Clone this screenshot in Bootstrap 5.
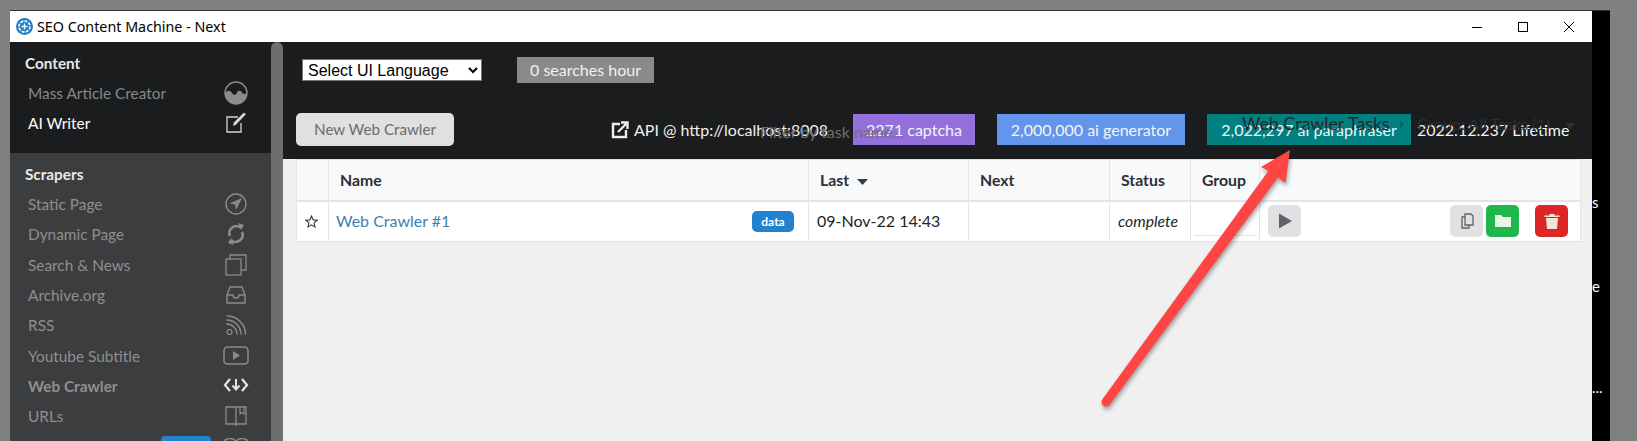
<!DOCTYPE html>
<html lang="en">
<head>
<meta charset="utf-8">
<title>SEO Content Machine - Next</title>
<link rel="stylesheet" href="https://cdn.jsdelivr.net/npm/bootstrap@5.3.0/dist/css/bootstrap.min.css">
<style>
html,body{height:441px;overflow:hidden}
body{background:#808080;font-family:Lato,"Liberation Sans",sans-serif;color:#212529;font-size:15px}
.shell{margin:10px 0 0 10px;width:1600px;height:431px;border-top:1px solid #333;background:#000;position:relative}
.appwin{width:1582px;height:100%;background:#f0f0f0}
.titlebar{height:31px;background:#fff;padding-left:6px;font-family:"Noto Sans","Open Sans",sans-serif;font-size:14.3px;color:#000;line-height:31px}
.titlebar .ttl{margin-left:4px}
.winbtn{width:46px;height:31px}
.appbody{height:399px;overflow:hidden}
.sidenav{width:261px;flex:none;background:#3c3d3f}
.sec-dark{background:#1b1c1e;height:111px;padding-top:6px}
.sec-mid{padding-top:6px}
.sec-head{font-weight:700;color:#e8e8e8;padding-left:15px;height:30px;line-height:30px;font-size:15.3px}
.navrow{height:30.3px;padding:0 22px 0 18px;color:#888;font-size:15.4px;line-height:30px}
.navrow.on{color:#fff;font-weight:700}
.sec-mid .navrow{color:#8f8f8f}
.navrow svg{display:block;width:26px;height:26px;color:#8b8b8b}
.navrow.on svg{color:#e4e4e4}
.tagblue{width:50px;height:21px;background:#2183cf;border-radius:4px;margin:0 12px 0 auto}
.scrolltrack{width:12px;flex:none;background:#1b1c1e}
.scrollthumb{background:#6d6e70;border-radius:6px 6px 0 0;height:100%}
.mainpane{flex:1;min-width:0;position:relative}
.headbar{background:#1b1c1e;height:117px;padding:0 13px;position:relative}
.toprow{height:71px;padding:17px 6px 0}
.uilang{width:180px;height:22px;font:16px "Liberation Sans",sans-serif;background:#fff;color:#000;border:1px solid #777;border-radius:0;padding:0 0 0 1px}
.hits{background:#8a8a8a;color:#f0f0f0;height:26px;line-height:26px;width:137px;text-align:center;margin:-2px 0 0 35px;font-size:16px}
.newbtn{width:158px;height:33px;background:#e0e0e0;border:0;border-radius:5px;color:#6c6c6c;font-size:15.2px;padding:0}
.apilink{color:#eee;font-size:16px;margin-left:157px;width:242px;white-space:nowrap}
.apilink svg{width:18px;height:18px;margin-right:5px;flex:none}
.stat{height:31px;line-height:31px;color:#f4f4f4;font-size:16px;text-align:center;white-space:nowrap}
.st-a{background:#9370db;width:122px}
.st-b{background:#6495ed;width:188px;margin-left:22px}
.st-c{background:#008080;width:204px;margin-left:22px}
.lifetime{color:#f4f4f4;font-size:16px;margin-left:6px;white-space:nowrap}
.ghost{position:absolute;white-space:nowrap}
.gh1{left:477px;top:78px;color:#6f6f6f;font-size:16px}
.gh2{left:959px;top:68px;color:#23272b;font-size:17.8px}
.gh3{left:1116px;top:68px;color:#3a3d40;font-size:17px}
.gh4{left:1134px;top:70px;color:#2d3033;font-size:16px}
.gh5{left:1282px;top:81px;width:0;height:0;border:5px solid transparent;border-top:6px solid #2d3033;border-bottom:0}
.tablewrap{padding:0 13px}
.jobs{table-layout:fixed;width:1284px;--bs-table-border-color:#e3e4e6;--bs-table-color:#212529;--bs-table-bg:#fff;margin:0;border-color:#e3e4e6;font-size:16px}
.jobs>:not(caption)>*>*{padding:0 12px;vertical-align:middle;height:41px;border-width:1px}
.jobs thead th{background:#f8f9fa;font-weight:700;font-size:15.8px;color:#2b2f33;padding-left:11px}
.jobs thead tr>*{border-bottom-width:2px}
.jobs a{color:#3d7fb5;text-decoration:none;font-size:16px;margin-left:-1px}
.tag-data{background:#2183cf;color:#fff;font-weight:700;font-size:12px;width:42px;height:21px;line-height:21px;border-radius:5px;text-align:center;margin-right:2px}
.dt{font-size:16px;white-space:nowrap}
.statecell{font-style:italic;font-size:15.8px;white-space:nowrap;padding-left:8px!important}
.groupline{border-bottom:1px solid #e3e4e6;height:29px;margin:0 -10px 0 -9px}
.tbtn{width:33px;height:32px;border:0;border-radius:5px;padding:0;display:flex;align-items:center;justify-content:center}
.tbtn svg{width:18px;height:18px;display:block}
.t-gray{background:#e0e1e3;color:#606266}
.t-green{background:#20b74a;color:#e8f5e4;margin-left:3px}
.t-red{background:#dc2626;color:#f4e4dc;margin-left:16px;margin-right:4px}
.crop{position:absolute;color:#fff;font-size:15px;left:1582px;line-height:1}
.callout{position:absolute;left:0;top:0;width:1637px;height:441px;pointer-events:none;filter:drop-shadow(1px 3px 2px rgba(0,0,0,.35))}
</style>
</head>
<body>
<div class="shell">
  <div class="appwin d-flex flex-column">
    <div class="titlebar d-flex align-items-center">
      <svg width="17" height="17" viewBox="0 0 17 17"><circle cx="8.5" cy="8.5" r="8.5" fill="#1f7fc4"/><circle cx="8.5" cy="8.5" r="5.5" fill="none" stroke="#fff" stroke-width="1.6" stroke-dasharray="3 1.2"/><path d="M5.5 8.5h6M8.5 5.5v6" stroke="#fff" stroke-width="1.3"/></svg>
      <span class="ttl">SEO Content Machine - Next</span>
      <div class="ms-auto d-flex">
        <div class="winbtn d-flex align-items-center justify-content-center"><svg width="12" height="12" viewBox="0 0 12 12"><path d="M1 6.5h10" stroke="#000"/></svg></div>
        <div class="winbtn d-flex align-items-center justify-content-center"><svg width="12" height="12" viewBox="0 0 12 12"><rect x="1.5" y="1.5" width="9" height="9" fill="none" stroke="#000"/></svg></div>
        <div class="winbtn d-flex align-items-center justify-content-center"><svg width="12" height="12" viewBox="0 0 12 12"><path d="M1 1l10 10M11 1L1 11" stroke="#000"/></svg></div>
      </div>
    </div>
    <div class="appbody d-flex">
      <nav class="sidenav">
        <div class="sec-dark">
          <div class="sec-head">Content</div>
          <div class="navrow d-flex justify-content-between align-items-center"><span>Mass Article Creator</span>
            <svg viewBox="0 0 26 26"><circle cx="13" cy="13" r="11" fill="none" stroke="currentColor" stroke-width="1.4"/><path d="M2 13c3-3 5-3 7 0s4 2 5-.5 4-2 5 0 3 1.500 5 .5a11 11 0 0 1-22 0z" fill="currentColor"/></svg></div>
          <div class="navrow on d-flex justify-content-between align-items-center"><span class="fw-normal">AI Writer</span>
            <svg viewBox="0 0 26 26" style="color:#d8d4d0"><path d="M18 13v9H4V7h11" fill="none" stroke="currentColor" stroke-width="1.3"/><path d="M10 16l.8-3.500L21 2.500l1.800 1.800L13 14.800z" fill="currentColor"/></svg></div>
        </div>
        <div class="sec-mid">
          <div class="sec-head">Scrapers</div>
          <div class="navrow d-flex justify-content-between align-items-center"><span>Static Page</span>
            <svg viewBox="0 0 26 26"><circle cx="13" cy="13" r="10" fill="none" stroke="currentColor" stroke-width="1.4"/><path d="M19 7L6.500 12.500l5.500 1 1 5.500z" fill="currentColor"/></svg></div>
          <div class="navrow d-flex justify-content-between align-items-center"><span>Dynamic Page</span>
            <svg viewBox="0 0 26 26"><path d="M7 15A7 7 0 0 1 17.500 6.500M19 11a7 7 0 0 1-10.500 8.500" fill="none" stroke="currentColor" stroke-width="2.600"/><path d="M15 2l6 2-3 5zM11 24l-6-2 3-5z" fill="currentColor"/></svg></div>
          <div class="navrow d-flex justify-content-between align-items-center"><span>Search &amp; News</span>
            <svg viewBox="0 0 26 26"><rect x="3" y="7" width="15" height="16" fill="none" stroke="currentColor" stroke-width="1.3"/><path d="M7 7V3h16v15h-5" fill="none" stroke="currentColor" stroke-width="1.3"/></svg></div>
          <div class="navrow d-flex justify-content-between align-items-center"><span>Archive.org</span>
            <svg viewBox="0 0 26 26"><path d="M4 13l3-8h12l3 8v8H4z" fill="none" stroke="currentColor" stroke-width="1.4"/><path d="M4 13h6c0 2 1 3 3 3s3-1 3-3h6" fill="none" stroke="currentColor" stroke-width="1.4"/></svg></div>
          <div class="navrow d-flex justify-content-between align-items-center"><span>RSS</span>
            <svg viewBox="0 0 26 26"><circle cx="6.500" cy="20" r="2.500" fill="none" stroke="currentColor" stroke-width="1.200"/><path d="M3.500 12a10.500 10.500 0 0 1 10.500 10.500M3.500 8A14.500 14.500 0 0 1 18 22.500M3.500 4A18.500 18.500 0 0 1 22.500 22.500" fill="none" stroke="currentColor" stroke-width="1.500"/></svg></div>
          <div class="navrow d-flex justify-content-between align-items-center"><span>Youtube Subtitle</span>
            <svg viewBox="0 0 26 26"><rect x="1" y="4" width="24" height="17" rx="3.500" fill="none" stroke="currentColor" stroke-width="1.500"/><path d="M10 8l7 4.500-7 4.500z" fill="currentColor"/></svg></div>
          <div class="navrow on d-flex justify-content-between align-items-center"><span>Web Crawler</span>
            <svg viewBox="0 0 26 26"><path d="M7 6l-5 6 5 6M19 6l5 6-5 6" fill="none" stroke="currentColor" stroke-width="2.200"/><path d="M13 6v10M9.500 12.500L13 16.500l3.500-4" fill="none" stroke="currentColor" stroke-width="2"/></svg></div>
          <div class="navrow d-flex justify-content-between align-items-center"><span>URLs</span>
            <svg viewBox="0 0 26 26"><path d="M3 4h20v17H3zM13 4v19" fill="none" stroke="currentColor" stroke-width="1.300"/><path d="M17 4v7l2-1.500 2 1.500V4" fill="none" stroke="currentColor" stroke-width="1.200"/></svg></div>
          <div class="navrow d-flex align-items-center"><span class="tagblue"></span>
            <svg viewBox="0 0 26 26"><path d="M2 6c4-2 8-2 11 1 3-3 7-3 11-1v15c-4-2-8-2-11 1-3-3-7-3-11-1zM13 7v15" fill="none" stroke="currentColor" stroke-width="1.400"/></svg></div>
        </div>
      </nav>
      <div class="scrolltrack"><div class="scrollthumb"></div></div>
      <main class="mainpane">
        <div class="headbar">
          <div class="toprow d-flex align-items-start">
            <select class="uilang" aria-label="UI language"><option>Select UI Language</option></select>
            <div class="hits">0 searches hour</div>
          </div>
          <div class="d-flex align-items-center">
            <button class="newbtn" type="button">New Web Crawler</button>
            <div class="apilink d-flex align-items-center">
              <svg viewBox="0 0 18 18"><path d="M9 3H2v13h13V9" fill="none" stroke="currentColor" stroke-width="2.400"/><path d="M7 11l8-8M10 1.500h6.500V8" fill="none" stroke="currentColor" stroke-width="2.400"/></svg>
              <span>API @ http://localhost:8008</span>
            </div>
            <div class="stat st-a">2271 captcha</div>
            <div class="stat st-b">2,000,000 ai generator</div>
            <div class="stat st-c">2,022,297 ai paraphraser</div>
            <div class="lifetime">2022.12.237 Lifetime</div>
          </div>
          <span class="ghost gh1">Filter by task name...</span>
          <span class="ghost gh2">Web Crawler Tasks</span>
          <span class="ghost gh3">›</span>
          <span class="ghost gh4">Group: All Tasks (1)</span>
          <span class="ghost gh5"></span>
        </div>
        <div class="tablewrap">
          <table class="table table-bordered jobs">
            <colgroup><col style="width:32px"><col style="width:480px"><col style="width:160px"><col style="width:141px"><col style="width:81px"><col style="width:69px"><col style="width:321px"></colgroup>
            <thead><tr><th></th><th>Name</th><th>Last <svg width="11" height="6" viewBox="0 0 11 6" class="ms-1"><path d="M0 0h11L5.500 6z" fill="#3a3d40"/></svg></th><th>Next</th><th>Status</th><th>Group</th><th></th></tr></thead>
            <tbody><tr>
              <td class="px-2"><svg width="13" height="13" viewBox="0 0 24 24" class="d-block"><path d="M12 2l3 7 7.500.7-5.700 5 1.700 7.300L12 18.200 5.500 22l1.700-7.300-5.700-5L9 9z" fill="none" stroke="#33373a" stroke-width="2"/></svg></td>
              <td class="ps-2"><div class="d-flex justify-content-between align-items-center"><a href="#">Web Crawler #1</a><div class="tag-data">data</div></div></td>
              <td class="dt ps-2">09-Nov-22 14:43</td>
              <td></td>
              <td class="statecell">complete</td>
              <td><div class="groupline"></div></td>
              <td class="px-2"><div class="d-flex align-items-center">
                <button class="tbtn t-gray" type="button" aria-label="Run"><svg viewBox="0 0 18 18"><path d="M3 1.500l13 7.500-13 7.500z" fill="currentColor"/></svg></button>
                <button class="tbtn t-gray ms-auto" type="button" aria-label="Copy"><svg viewBox="0 0 18 18"><path d="M7 2h6l2 2v9H7z" fill="none" stroke="currentColor" stroke-width="1.300"/><path d="M7 5H4v11h7v-3" fill="none" stroke="currentColor" stroke-width="1.300"/></svg></button>
                <button class="tbtn t-green" type="button" aria-label="Open"><svg viewBox="0 0 18 18"><path d="M1 3h6l2 2h8v10H1z" fill="currentColor"/></svg></button>
                <button class="tbtn t-red" type="button" aria-label="Delete"><svg viewBox="0 0 18 18"><path d="M1.500 3.500h15v1.500h-15zM6.500 2h5v1.500h-5zM3 6h12l-1 11H4z" fill="currentColor"/></svg></button>
              </div></td>
            </tr></tbody>
          </table>
        </div>
      </main>
    </div>
  </div>
  <span class="crop" style="top:184px">s</span>
  <span class="crop" style="top:268px">e</span>
  <span class="crop" style="top:369px">...</span>
</div>
<svg class="callout" viewBox="0 0 1637 441" aria-hidden="true">
  <path d="M1290 150L1261 167 1268.500 170.800 1102.400 399.300a4.500 4.500 0 0 0 7.200 5.400L1278 177.500 1285.500 183z" fill="#ff4444"/>
</svg>
<script src="https://cdn.jsdelivr.net/npm/bootstrap@5.3.0/dist/js/bootstrap.bundle.min.js"></script>
</body>
</html>
